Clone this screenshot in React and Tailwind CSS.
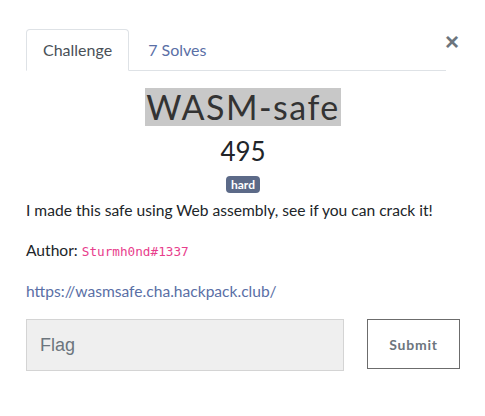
import { useState } from "react";

export default function App() {
  const [tab, setTab] = useState("challenge");
  const [flag, setFlag] = useState("");

  return (
    <div className="relative w-[485px] h-[416px] bg-white font-['Lato',sans-serif] text-[#212529]">
      {/* close */}
      <button className="absolute left-[444px] top-[31px] w-[16px] h-[22px] text-[24px] leading-[22px] font-bold text-[#6c757d] font-['Liberation_Sans',sans-serif]">
        ×
      </button>

      <div className="pt-[29px] pl-[26px] pr-[25px]">
        {/* tabs */}
        <div className="flex w-[420px] border-b border-[#dee2e6] text-[16px] leading-[24px]">
          <button
            onClick={() => setTab("challenge")}
            className={`-mb-px px-[16px] py-[8px] rounded-t-[4px] border ${
              tab === "challenge"
                ? "border-[#dee2e6] border-b-white bg-white text-[#495057]"
                : "border-transparent text-[#5a6fa6]"
            }`}
          >
            Challenge
          </button>
          <button
            onClick={() => setTab("solves")}
            className={`-mb-px px-[18px] py-[8px] rounded-t-[4px] border ${
              tab === "solves"
                ? "border-[#dee2e6] border-b-white bg-white text-[#495057]"
                : "border-transparent text-[#5a6fa6]"
            }`}
          >
            7 Solves
          </button>
        </div>

        {/* header */}
        <div className="flex flex-col items-center mt-[17px]">
          <h2 className="h-[38px] px-[1px] bg-[#c8c8c8] text-[34px] leading-[38px] tracking-[1.5px] text-[#333]">
            WASM-safe
          </h2>
          <div className="mt-[9px] text-[26px] leading-[32px] text-[#212529]">495</div>
          <span className="mt-[9px] h-[17px] px-[5px] rounded-[4px] bg-[#5c6a88] text-white text-[12px] leading-[17px] font-bold">
            hard
          </span>
        </div>

        {/* description */}
        <div className="mt-[5px] text-[15.6px] leading-[24px]">
          <p>I made this safe using Web assembly, see if you can crack it!</p>
          <p className="mt-[16px]">
            Author:{" "}
            <code className="font-['DejaVu_Sans_Mono',monospace] text-[12.7px] text-[#e83e8c]">
              Sturmh0nd#1337
            </code>
          </p>
          <p className="mt-[15px]">
            <a href="#" className="text-[#5a6fa6]">
              https://wasmsafe.cha.hackpack.club/
            </a>
          </p>
        </div>

        {/* flag form */}
        <div className="flex items-start mt-[16px]">
          <input
            value={flag}
            onChange={(e) => setFlag(e.target.value)}
            placeholder="Flag"
            className="w-[318px] h-[52px] px-[13px] bg-[#efefef] border border-[#d4d4d4] outline-none text-[18px] font-['Liberation_Sans',sans-serif] text-[#495057] placeholder:text-[#6c757d]"
          />
          <button className="ml-[23px] w-[93px] h-[50px] border border-[#6c6c6c] text-[14px] font-bold tracking-[0.8px] text-[#6c757d]">
            Submit
          </button>
        </div>
      </div>
    </div>
  );
}
